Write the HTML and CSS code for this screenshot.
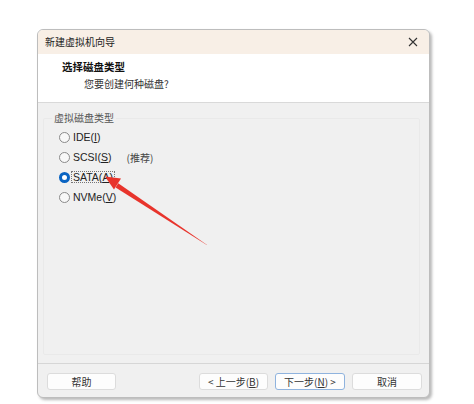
FILE: index.html
```html
<!DOCTYPE html>
<html lang="zh-CN">
<head>
<meta charset="utf-8">
<link rel="stylesheet" href="styles.css">
</head>
<body>
<div class="page">
  <div class="dialog">
    <div class="titlebar">
      <span class="title">新建虚拟机向导</span>
      <svg class="close" width="10" height="10" viewBox="0 0 10 10"><path d="M1 1 L9 9 M9 1 L1 9" stroke="#333" stroke-width="1.1" fill="none"/></svg>
    </div>
    <div class="header">
      <div class="h-title">选择磁盘类型</div>
      <div class="h-sub">您要创建何种磁盘?</div>
    </div>
    <div class="body">
      <fieldset class="group">
        <legend>虚拟磁盘类型</legend>
        <div class="opt"><span class="radio"></span><span class="lbl">IDE(<u>I</u>)</span></div>
        <div class="opt"><span class="radio"></span><span class="lbl">SCSI(<u>S</u>)</span><span class="rec">(推荐)</span></div>
        <div class="opt"><span class="radio on"></span><span class="lbl focus">SATA(<u>A</u>)</span></div>
        <div class="opt"><span class="radio"></span><span class="lbl">NVMe(<u>V</u>)</span></div>
      </fieldset>
    </div>
    <div class="footer">
      <button class="btn">帮助</button>
      <div class="nav">
        <button class="btn">&lt; 上一步(<u>B</u>)</button>
        <button class="btn primary">下一步(<u>N</u>) &gt;</button>
        <button class="btn">取消</button>
      </div>
    </div>
  </div>
  <svg class="arrow" width="474" height="404" viewBox="0 0 474 404">
    <polygon points="207.2,245.3 206.8,244.7 118.2,183.2 115.6,187.5" fill="#e8342c"/>
    <polygon points="105,176.5 121,178.5 114,189.5" fill="#e8342c"/>
  </svg>
</div>
</body>
</html>
```
FILE: styles.css
```css
* { box-sizing: border-box; }
html, body { margin: 0; padding: 0; background: #fff; }
body {
  width: 474px;
  height: 404px;
  overflow: hidden;
  font-family: "Noto Sans CJK SC", "Noto Sans", sans-serif;
  color: #222;
}
.page {
  position: relative;
  width: 474px;
  height: 404px;
  padding: 29px 0 0 37px;
}
.dialog {
  width: 393px;
  height: 369px;
  border: 1px solid #bdbdbd;
  border-radius: 6px;
  overflow: hidden;
  display: flex;
  flex-direction: column;
  background: #f0f0f0;
  box-shadow: 2px 2px 3px rgba(0,0,0,0.28);
}
.titlebar {
  height: 24px;
  background: #f8efe6;
  display: flex;
  align-items: center;
  justify-content: space-between;
  padding: 0 11px 0 7px;
}
.title {
  font-size: 10px;
  color: #222;
  line-height: 12px;
}
.close { display: block; }
.header {
  height: 49px;
  background: #fff;
  border-bottom: 1px solid #d9d9d9;
  padding: 6px 0 0 24px;
}
.h-title {
  font-size: 10.5px;
  font-weight: 700;
  line-height: 14px;
  color: #111;
}
.h-sub {
  font-size: 10px;
  line-height: 13px;
  color: #333;
  padding: 3px 0 0 22px;
}
.body {
  flex: 1;
  padding: 8px 9px 8px 5px;
  border-bottom: 1px solid #d6d6d6;
}
.group {
  margin: 0;
  height: 244px;
  border: 1px solid #e9e9e9;
  border-radius: 2px;
  padding: 2px 0 0 15px;
}
.group legend {
  font-size: 10px;
  line-height: 14px;
  color: #555;
  padding: 0 2px;
  margin-left: -7px;
}
.opt {
  height: 20px;
  display: flex;
  align-items: center;
  font-family: "Liberation Sans", "Noto Sans CJK SC", sans-serif;
  font-size: 10.5px;
  color: #222;
}
.radio {
  width: 11px;
  height: 11px;
  border-radius: 50%;
  border: 1px solid #8a8a8a;
  background: #f8f8f8;
  margin-right: 1px;
  flex: none;
}
.radio.on {
  border: 3px solid #0a64c2;
  background: #fff;
}
.lbl {
  padding: 0 1px;
  border: 1px solid transparent;
  line-height: 10px;
}
.lbl.focus {
  border: 1px dotted #777;
}
.rec {
  margin-left: 13px;
  font-family: "Noto Sans CJK SC", sans-serif;
  font-size: 10px;
  color: #444;
}
.footer {
  height: 33px;
  display: flex;
  justify-content: space-between;
  align-items: flex-start;
  padding: 9px 7px 0 9px;
}
.nav { display: flex; gap: 7px; }
.btn {
  width: 70px;
  height: 17px;
  margin: 0;
  padding: 0;
  border: 1px solid #dcdcdc;
  border-radius: 3px;
  background: #fdfdfd;
  font-family: "Noto Sans CJK SC", "Liberation Sans", sans-serif;
  font-size: 10px;
  line-height: 14px;
  color: #333;
}
.btn:first-child { width: 69px; }
.btn.primary { border-color: #8fb3de; }
.arrow {
  position: absolute;
  left: 0;
  top: 0;
  pointer-events: none;
}
```
